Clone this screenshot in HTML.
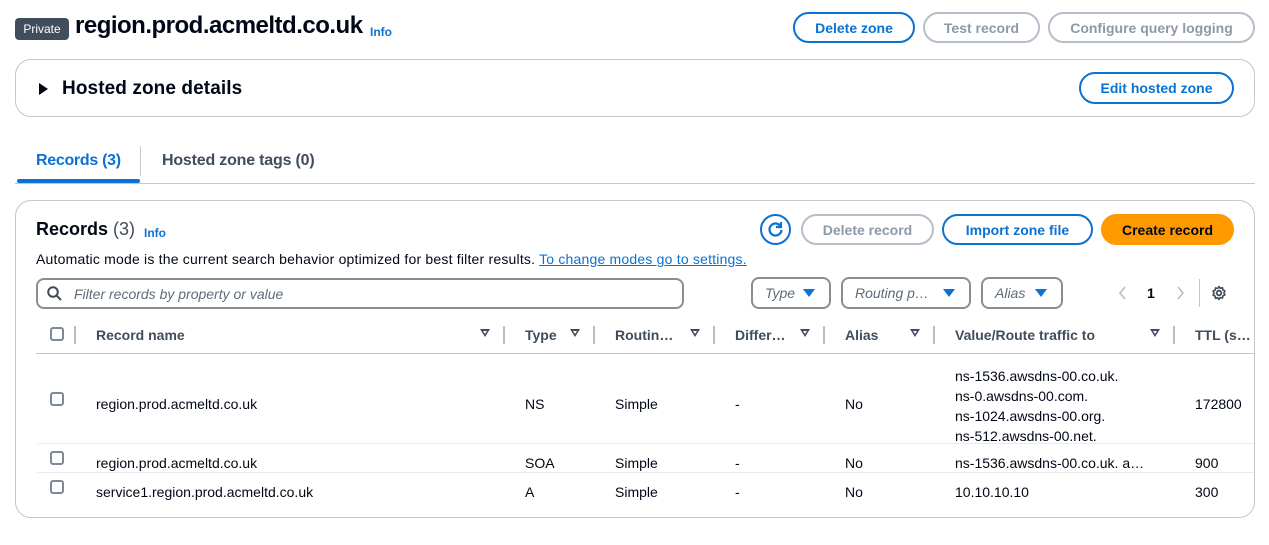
<!DOCTYPE html>
<html><head><style>
*{box-sizing:border-box;margin:0;padding:0}
body{width:1269px;height:545px;background:#fff;font-family:"Liberation Sans",Arial,sans-serif;color:#000716;position:relative;overflow:hidden;font-size:14px}
.a{position:absolute;white-space:nowrap}
.btn{position:absolute;border:2px solid #0972d3;border-radius:20px;color:#0972d3;font-weight:bold;font-size:14px;display:flex;align-items:center;justify-content:center;background:#fff}
.dis{border-color:#b6bec9;color:#8d99a8}
.box{position:absolute;border:1px solid #c6c6cd;border-radius:16px}
.cb{position:absolute;width:14px;height:14px;border:2px solid #7d8998;border-radius:3px}
.sel{position:absolute;border:2px solid #8c8c94;border-radius:8px;font-style:italic;color:#5f6b7a;display:flex;align-items:center;padding-left:12px;font-size:14px}
.tri{position:absolute;width:0;height:0;border-left:6px solid transparent;border-right:6px solid transparent;border-top:8px solid #0972d3}
.hd{position:absolute;font-weight:bold;color:#414d5c;top:327px}
.sep{position:absolute;width:2px;height:18px;background:#b6bec9;top:326px}
.si{position:absolute;top:329px;width:0;height:0;border-left:5px solid transparent;border-right:5px solid transparent;border-top:8px solid #414d5c}
.si:after{content:"";position:absolute;left:-2px;top:-6px;border-left:2px solid transparent;border-right:2px solid transparent;border-top:3px solid #fff}
.line{position:absolute;height:1px;background:#e9ebed}
</style></head><body>
<div class="a" style="left:15px;top:18px;width:54px;height:22px;background:#414d5c;border-radius:4px;color:#fff;font-size:12px;display:flex;align-items:center;justify-content:center">Private</div>
<div class="a" style="left:75px;top:12px;font-size:24px;font-weight:bold;letter-spacing:-0.5px">region.prod.acmeltd.co.uk</div>
<div class="a" style="left:370px;top:25px;font-size:12px;font-weight:bold;color:#0972d3">Info</div>
<div class="btn" style="left:793px;top:12px;width:122px;height:31px">Delete zone</div>
<div class="btn dis" style="left:923px;top:12px;width:117px;height:31px">Test record</div>
<div class="btn dis" style="left:1048px;top:12px;width:207px;height:31px">Configure query logging</div>

<div class="box" style="left:15px;top:59px;width:1240px;height:58px"></div>
<div class="a" style="left:39px;top:83px;width:0;height:0;border-top:6px solid transparent;border-bottom:6px solid transparent;border-left:9px solid #000716"></div>
<div class="a" style="left:62px;top:78px;font-size:19px;font-weight:bold;letter-spacing:0.1px">Hosted zone details</div>
<div class="btn" style="left:1079px;top:72px;width:155px;height:32px">Edit hosted zone</div>

<div class="a" style="left:36px;top:152px;font-size:16px;font-weight:bold;color:#0972d3;letter-spacing:-0.3px">Records (3)</div>
<div class="a" style="left:17px;top:179px;width:123px;height:4px;background:#0972d3;border-radius:2px"></div>
<div class="a" style="left:140px;top:146px;width:1px;height:30px;background:#c6c6cd"></div>
<div class="a" style="left:162px;top:152px;font-size:16px;font-weight:bold;color:#414d5c;letter-spacing:-0.2px">Hosted zone tags (0)</div>
<div class="a" style="left:15px;top:183px;width:1240px;height:1px;background:#c6c6cd"></div>

<div class="box" style="left:15px;top:200px;width:1240px;height:318px"></div>
<div class="a" style="left:36px;top:219px;font-size:18px;font-weight:bold">Records <span style="font-weight:normal;color:#414d5c">(3)</span></div>
<div class="a" style="left:144px;top:226px;font-size:12px;font-weight:bold;color:#0972d3">Info</div>
<div class="a" style="left:760px;top:214px;width:31px;height:31px;border:2px solid #0972d3;border-radius:50%"></div>
<svg class="a" style="left:766px;top:220px" width="19" height="19" viewBox="0 0 19 19"><path d="M14 5.5A6 6 0 1 0 15.5 10" fill="none" stroke="#0972d3" stroke-width="2.2"/><path d="M15 2v5h-5" fill="none" stroke="#0972d3" stroke-width="2.2"/></svg>
<div class="btn dis" style="left:801px;top:214px;width:133px;height:31px">Delete record</div>
<div class="btn" style="left:942px;top:214px;width:151px;height:31px">Import zone file</div>
<div class="btn" style="left:1101px;top:214px;width:133px;height:31px;background:#ff9900;border-color:#ff9900;color:#000716">Create record</div>
<div class="a" style="left:36px;top:251px;color:#000716;letter-spacing:0.2px">Automatic mode is the current search behavior optimized for best filter results. <span style="color:#0972d3;text-decoration:underline">To change modes go to settings.</span></div>

<div class="sel" style="left:36px;top:278px;width:648px;height:31px;padding-left:36px">Filter records by property or value</div>
<svg class="a" style="left:47px;top:286px" width="15" height="15" viewBox="0 0 15 15"><circle cx="6" cy="6" r="4.8" fill="none" stroke="#414d5c" stroke-width="2"/><path d="M9.5 9.5L14 14" stroke="#414d5c" stroke-width="2"/></svg>
<div class="sel" style="left:751px;top:277px;width:80px;height:32px">Type</div><div class="tri" style="left:803px;top:289px"></div>
<div class="sel" style="left:841px;top:277px;width:130px;height:32px">Routing p…</div><div class="tri" style="left:943px;top:289px"></div>
<div class="sel" style="left:981px;top:277px;width:82px;height:32px">Alias</div><div class="tri" style="left:1035px;top:289px"></div>
<svg class="a" style="left:1117px;top:286px" width="12" height="14" viewBox="0 0 12 14"><path d="M8 1L3 7l5 6" fill="none" stroke="#b6bec9" stroke-width="1.6"/></svg>
<div class="a" style="left:1147px;top:285px;font-weight:bold">1</div>
<svg class="a" style="left:1174px;top:286px" width="12" height="14" viewBox="0 0 12 14"><path d="M4 1l5 6-5 6" fill="none" stroke="#b6bec9" stroke-width="1.6"/></svg>
<div class="a" style="left:1199px;top:279px;width:1px;height:28px;background:#c6c6cd"></div>
<svg class="a" style="left:1211px;top:285px" width="16" height="16" viewBox="0 0 16 16"><circle cx="8" cy="8" r="2.3" fill="none" stroke="#414d5c" stroke-width="1.8"/><path d="M8 1.5l1.3 1.8 2.2-.6.4 2.2 2 1-1 2 1 2-2 1-.4 2.2-2.2-.6L8 14.5l-1.3-1.8-2.2.6-.4-2.2-2-1 1-2-1-2 2-1 .4-2.2 2.2.6z" fill="none" stroke="#414d5c" stroke-width="1.6" stroke-linejoin="round"/></svg>

<div class="cb" style="left:50px;top:327px"></div>
<div class="sep" style="left:74px"></div>
<div class="hd" style="left:96px">Record name</div><div class="si" style="left:480px"></div><div class="sep" style="left:503px"></div>
<div class="hd" style="left:525px">Type</div><div class="si" style="left:570px"></div><div class="sep" style="left:593px"></div>
<div class="hd" style="left:615px">Routin…</div><div class="si" style="left:690px"></div><div class="sep" style="left:713px"></div>
<div class="hd" style="left:735px">Differ…</div><div class="si" style="left:800px"></div><div class="sep" style="left:823px"></div>
<div class="hd" style="left:845px">Alias</div><div class="si" style="left:910px"></div><div class="sep" style="left:933px"></div>
<div class="hd" style="left:955px">Value/Route traffic to</div><div class="si" style="left:1150px"></div><div class="sep" style="left:1173px"></div>
<div class="hd" style="left:1195px">TTL (s…</div>
<div class="a" style="left:36px;top:353px;width:1218px;height:1px;background:#c6c6cd"></div>

<div class="cb" style="left:50px;top:392px"></div>
<div class="a" style="left:96px;top:396px">region.prod.acmeltd.co.uk</div>
<div class="a" style="left:525px;top:396px">NS</div><div class="a" style="left:615px;top:396px">Simple</div><div class="a" style="left:735px;top:396px">-</div><div class="a" style="left:845px;top:396px">No</div>
<div class="a" style="left:955px;top:366px;line-height:20px">ns-1536.awsdns-00.co.uk.<br>ns-0.awsdns-00.com.<br>ns-1024.awsdns-00.org.<br>ns-512.awsdns-00.net.</div>
<div class="a" style="left:1195px;top:396px">172800</div>
<div class="line" style="left:37px;top:443px;width:1217px"></div>

<div class="cb" style="left:50px;top:451px"></div>
<div class="a" style="left:96px;top:455px">region.prod.acmeltd.co.uk</div>
<div class="a" style="left:525px;top:455px">SOA</div><div class="a" style="left:615px;top:455px">Simple</div><div class="a" style="left:735px;top:455px">-</div><div class="a" style="left:845px;top:455px">No</div>
<div class="a" style="left:955px;top:455px">ns-1536.awsdns-00.co.uk. a…</div><div class="a" style="left:1195px;top:455px">900</div>
<div class="line" style="left:37px;top:472px;width:1217px"></div>

<div class="cb" style="left:50px;top:480px"></div>
<div class="a" style="left:96px;top:484px">service1.region.prod.acmeltd.co.uk</div>
<div class="a" style="left:525px;top:484px">A</div><div class="a" style="left:615px;top:484px">Simple</div><div class="a" style="left:735px;top:484px">-</div><div class="a" style="left:845px;top:484px">No</div>
<div class="a" style="left:955px;top:484px">10.10.10.10</div><div class="a" style="left:1195px;top:484px">300</div>
</body></html>
